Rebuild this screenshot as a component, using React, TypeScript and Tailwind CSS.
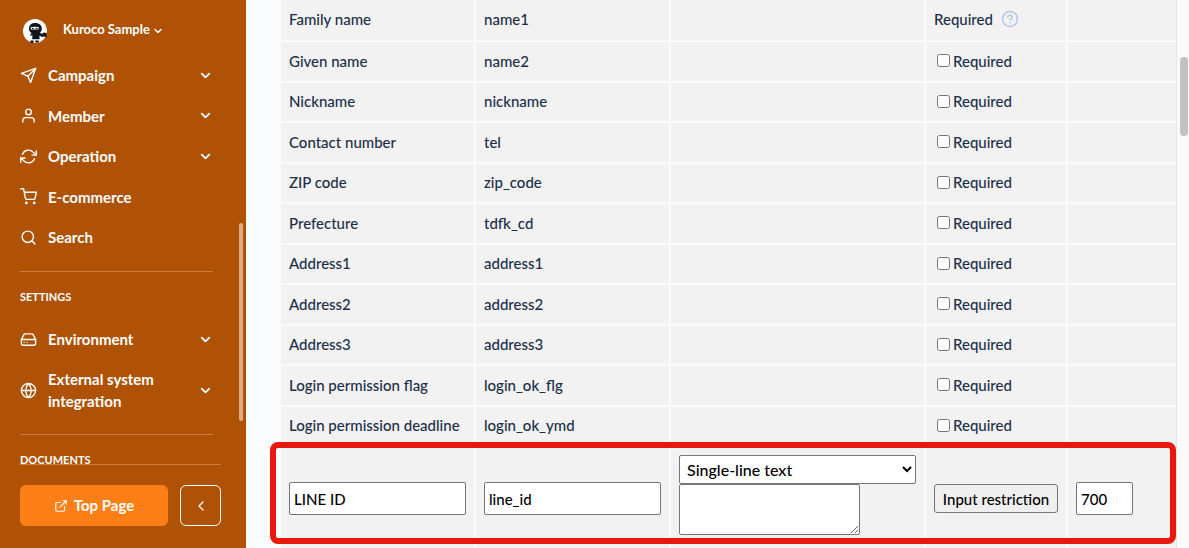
import {
  FiChevronDown,
  FiChevronLeft,
  FiExternalLink,
  FiGlobe,
  FiHardDrive,
  FiHelpCircle,
  FiRefreshCw,
  FiSearch,
  FiSend,
  FiShoppingCart,
  FiUser,
} from "react-icons/fi";
import type { IconType } from "react-icons";

type NavItem = { label: string; icon: IconType; expandable: boolean };

const mainItems: NavItem[] = [
  { label: "Campaign", icon: FiSend, expandable: true },
  { label: "Member", icon: FiUser, expandable: true },
  { label: "Operation", icon: FiRefreshCw, expandable: true },
  { label: "E-commerce", icon: FiShoppingCart, expandable: false },
  { label: "Search", icon: FiSearch, expandable: false },
];

const settingsItems: NavItem[] = [
  { label: "Environment", icon: FiHardDrive, expandable: true },
  { label: "External system integration", icon: FiGlobe, expandable: true },
];

const fields = [
  { name: "Given name", slug: "name2" },
  { name: "Nickname", slug: "nickname" },
  { name: "Contact number", slug: "tel" },
  { name: "ZIP code", slug: "zip_code" },
  { name: "Prefecture", slug: "tdfk_cd" },
  { name: "Address1", slug: "address1" },
  { name: "Address2", slug: "address2" },
  { name: "Address3", slug: "address3" },
  { name: "Login permission flag", slug: "login_ok_flg" },
  { name: "Login permission deadline", slug: "login_ok_ymd" },
];

const cell = "border-r-2 border-b-2 border-[#fafbfd] px-2 pb-[2px] last:border-r-0";

function NavLink({ item }: { item: NavItem }) {
  const Icon = item.icon;
  return (
    <a href="#" className="flex w-full items-center text-[15px] leading-[22px] font-bold">
      <Icon className="size-[17px] shrink-0" strokeWidth={2} />
      <span className="ml-[11px] w-[132px]">{item.label}</span>
      {item.expandable && <FiChevronDown className="ml-[18px] size-[15px] shrink-0" strokeWidth={3} />}
    </a>
  );
}

function Avatar() {
  return (
    <svg viewBox="0 0 24 24" className="size-6" aria-hidden="true">
      <circle cx="12" cy="12" r="12" fill="#fff" />
      <path
        d="M6 9.500C6 6 8.600 4 12.300 4s6.500 2.200 6.500 5.400c0 2-.8 3.400-2 4.300l2.400 1.200 1.300-1.500 3.300.6-.4 4.200-2.400-.8-1.900.5-2.700-1.300.2 3.600H9.200l.2-4.400-1.400 1-1-.6 1.500-2.200C6.800 13 6 11.500 6 9.500z"
        fill="#10151b"
      />
      <path d="M7.500 8.300c2.500-.8 6-.8 8.300 0l-.4 2.200H8z" fill="#fff" />
      <path d="M8.800 8.900h2v1.200h-2zM12.600 8.900h2v1.200h-2z" fill="#10151b" />
      <path d="M7.500 21.500h3V24h-3zM12.300 21.500h3.500v2h-3.500z" fill="#10151b" />
    </svg>
  );
}

function Sidebar() {
  return (
    <aside className="relative flex w-[246px] shrink-0 flex-col bg-[#b05205] text-white">
      <div className="min-h-0 flex-1 pl-5">
        <button type="button" className="mt-[19px] ml-[3px] flex h-6 items-center text-[13px] font-bold">
          <Avatar />
          <span className="-mt-[2px] ml-4">Kuroco Sample</span>
          <FiChevronDown className="ml-[2px] size-3" strokeWidth={3} />
        </button>
        <nav className="mt-3">
          <ul>
            {mainItems.map((item) => (
              <li key={item.label} className="flex odd:h-10 even:h-[41px]">
                <NavLink item={item} />
              </li>
            ))}
          </ul>
          <hr className="mt-[14px] mr-[33px] border-[#c67e48]" />
          <h2 className="mt-4 text-[11px] leading-[18px] font-bold">SETTINGS</h2>
          <ul className="mt-[13px]">
            {settingsItems.map((item) => (
              <li key={item.label} className="flex min-h-10 odd:mb-[9px]">
                <NavLink item={item} />
              </li>
            ))}
          </ul>
          <hr className="mt-[22px] mr-[33px] border-[#c67e48]" />
          <h2 className="mt-4 text-[11px] leading-[18px] font-bold">DOCUMENTS</h2>
        </nav>
      </div>
      <div className="mr-[25px] ml-5 flex h-[84px] shrink-0 gap-3 border-t border-[#c67e48] pt-5">
        <button
          type="button"
          className="flex h-[41px] w-[148px] items-center justify-center gap-[6px] rounded-md bg-[#ff7f17] text-[15px] font-bold"
        >
          <FiExternalLink className="size-[14px]" />
          Top Page
        </button>
        <button
          type="button"
          aria-label="Collapse menu"
          className="flex size-[41px] items-center justify-center rounded-md border border-white"
        >
          <FiChevronLeft className="size-4" />
        </button>
      </div>
      <div className="absolute top-[223px] right-[3px] h-[198px] w-1 rounded-sm bg-[#deab87]" />
    </aside>
  );
}

function FieldTable() {
  const control = "border border-[#767676] bg-white text-black";
  return (
    <table className="w-full table-fixed border-separate border-spacing-0 bg-[#f2f2f2] text-left text-[15px] leading-5 font-medium whitespace-nowrap text-[#1a2e49]">
      <colgroup>
        <col className="w-[195px]" />
        <col className="w-[195px]" />
        <col className="w-[255px]" />
        <col className="w-[142px]" />
        <col />
      </colgroup>
      <tbody>
        <tr className="h-[42px]">
          <td className={cell}>Family name</td>
          <td className={cell}>name1</td>
          <td className={cell} />
          <td className={cell}>
            <div className="flex items-center gap-2">
              Required
              <FiHelpCircle className="size-[18px] text-[#b3c6e4]" strokeWidth={2} />
            </div>
          </td>
          <td className={cell} />
        </tr>
        {fields.map((field) => (
          <tr key={field.slug} className="odd:h-10 even:h-[41px]">
            <td className={cell}>{field.name}</td>
            <td className={cell}>{field.slug}</td>
            <td className={cell} />
            <td className={cell}>
              <label className="flex items-center gap-[3px]">
                <input type="checkbox" className="ml-[3px] size-[13px]" />
                Required
              </label>
            </td>
            <td className={cell} />
          </tr>
        ))}
        <tr className="h-[107px]">
          <td className={cell}>
            <input aria-label="Field name" defaultValue="LINE ID" className={`${control} block h-[33px] w-full rounded-xs px-1`} />
          </td>
          <td className={cell}>
            <input aria-label="Field slug" defaultValue="line_id" className={`${control} block h-[33px] w-full rounded-xs px-1`} />
          </td>
          <td className={`${cell} pt-2 align-top`}>
            <select aria-label="Field type" className={`${control} block h-[29px] w-full rounded-xs px-[3px] text-base`}>
              <option>Single-line text</option>
            </select>
            <textarea aria-label="Options" className={`${control} block h-[51px] w-[181px] rounded-xs`} />
          </td>
          <td className={cell}>
            <button
              type="button"
              className="block h-[29px] w-[124px] rounded-[3px] border border-[#767676] bg-[#efefef] text-black"
            >
              Input restriction
            </button>
          </td>
          <td className={cell}>
            <input aria-label="Order" defaultValue="700" className={`${control} block h-[33px] w-[57px] rounded-xs px-1`} />
          </td>
        </tr>
      </tbody>
    </table>
  );
}

export default function App() {
  return (
    <div className="flex h-screen overflow-hidden bg-[#fafbfd] font-['Lato','Liberation_Sans',sans-serif]">
      <Sidebar />
      <main className="relative min-w-0 flex-1 overflow-hidden pl-[35px]">
        <FieldTable />
        <div className="pointer-events-none absolute top-[442px] right-0 left-6 h-[102px] rounded-lg border-[6px] border-[#e8190c]" />
      </main>
      <div className="w-[13px] shrink-0 border-l border-[#e8e8e8] bg-[#fafafa]">
        <div className="mt-[57px] ml-[3px] h-[79px] w-2 rounded-full bg-[#c1c1c1]" />
      </div>
    </div>
  );
}
